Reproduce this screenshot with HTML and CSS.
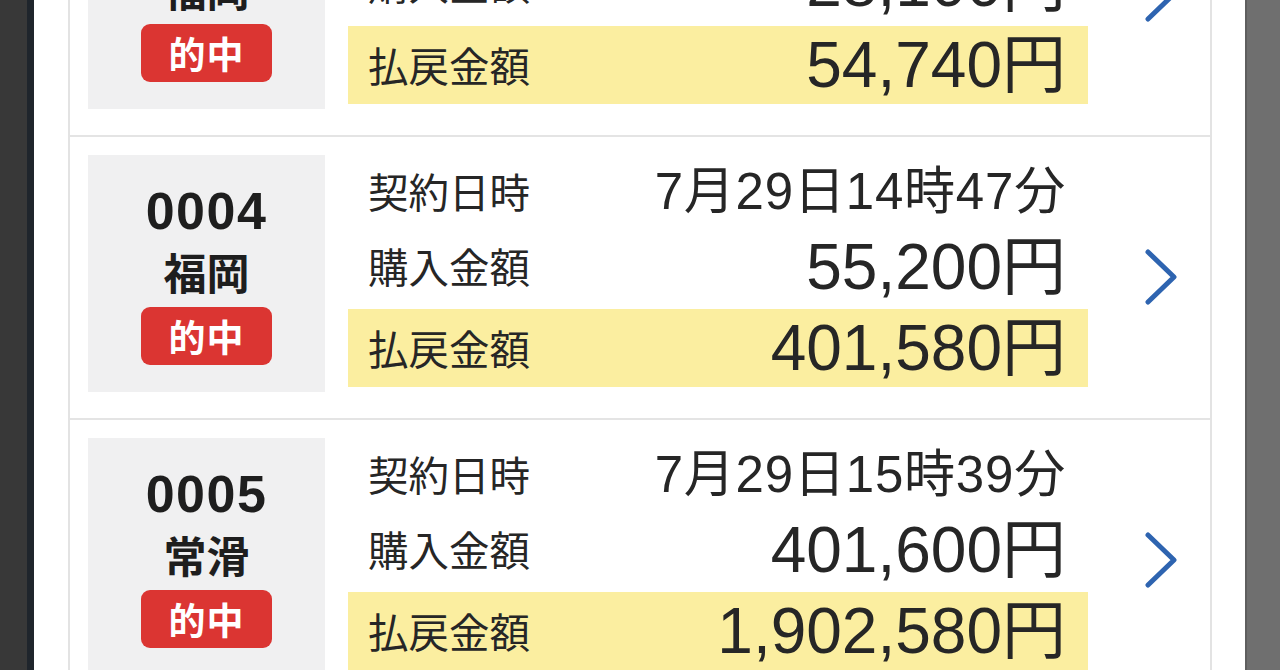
FILE: index.html
```html
<!DOCTYPE html>
<html lang="ja">
<head>
<meta charset="utf-8">
<title>的中一覧</title>
<link rel="stylesheet" href="styles.css">
</head>
<body>
<div class="screen">
  <div class="edge-left"><div class="edge-line"></div></div>
  <div class="sheet">
    <ul class="list">
      <li class="row">
        <div class="race">
          <div class="race-no">0003</div>
          <div class="race-place">福岡</div>
          <div class="badge">的中</div>
        </div>
        <div class="info">
          <div class="line first"><span class="label">契約日時</span><span class="date">7月29日13時58分</span></div>
          <div class="line"><span class="label">購入金額</span><span class="amount">28,100円</span></div>
          <div class="line pay"><span class="label">払戻金額</span><span class="amount">54,740円</span></div>
        </div>
        <div class="go"><svg class="chev" viewBox="0 0 32 56" width="32" height="56"><polyline points="3,3 29,28 3,53"/></svg></div>
      </li>
      <li class="row">
        <div class="race">
          <div class="race-no">0004</div>
          <div class="race-place">福岡</div>
          <div class="badge">的中</div>
        </div>
        <div class="info">
          <div class="line first"><span class="label">契約日時</span><span class="date">7月29日14時47分</span></div>
          <div class="line"><span class="label">購入金額</span><span class="amount">55,200円</span></div>
          <div class="line pay"><span class="label">払戻金額</span><span class="amount">401,580円</span></div>
        </div>
        <div class="go"><svg class="chev" viewBox="0 0 32 56" width="32" height="56"><polyline points="3,3 29,28 3,53"/></svg></div>
      </li>
      <li class="row">
        <div class="race">
          <div class="race-no">0005</div>
          <div class="race-place">常滑</div>
          <div class="badge">的中</div>
        </div>
        <div class="info">
          <div class="line first"><span class="label">契約日時</span><span class="date">7月29日15時39分</span></div>
          <div class="line"><span class="label">購入金額</span><span class="amount">401,600円</span></div>
          <div class="line pay"><span class="label">払戻金額</span><span class="amount">1,902,580円</span></div>
        </div>
        <div class="go"><svg class="chev" viewBox="0 0 32 56" width="32" height="56"><polyline points="3,3 29,28 3,53"/></svg></div>
      </li>
    </ul>
  </div>
  <div class="edge-right"></div>
</div>
</body>
</html>
```

FILE: styles.css
```css
* { box-sizing: border-box; }
html, body {
  margin: 0;
  padding: 0;
  width: 1280px;
  height: 670px;
  overflow: hidden;
  background: #ffffff;
}
.screen {
  display: flex;
  width: 1280px;
  height: 670px;
  overflow: hidden;
  font-family: "Liberation Sans", "Noto Sans CJK JP", sans-serif;
  color: #232323;
}
.edge-left {
  width: 34px;
  flex: none;
  background: #383838;
  display: flex;
  justify-content: flex-end;
}
.edge-line {
  width: 7px;
  background: #1f252c;
}
.sheet {
  width: 1211px;
  flex: none;
  background: #ffffff;
  padding-left: 34px;
}
.edge-right {
  flex: 1;
  background: #6f6f6f;
  border-left: 2px solid #5e5e5e;
}
.list {
  list-style: none;
  margin: -146px 0 0 0;
  padding: 0;
  width: 1144px;
  border-left: 2px solid #e3e3e3;
  border-right: 2px solid #e3e3e3;
}
.row {
  display: flex;
  align-items: stretch;
  padding: 18px 0 26px 18px;
  border-bottom: 2px solid #e4e4e4;
}
.race {
  width: 237px;
  height: 237px;
  flex: none;
  background: #f0f0f1;
  display: flex;
  flex-direction: column;
  align-items: center;
  justify-content: center;
  padding-top: 0;
}
.race-no {
  font-family: "Liberation Sans", sans-serif;
  font-weight: bold;
  font-size: 52px;
  letter-spacing: 1.5px;
  line-height: 58px;
  color: #1e1e1e;
}
.race-place {
  font-family: "Noto Sans CJK JP", sans-serif;
  font-weight: bold;
  font-size: 43px;
  line-height: 62px;
  color: #1e1e1e;
}
.badge {
  width: 131px;
  height: 58px;
  margin-top: 5px;
  border-radius: 9px;
  background: #db3532;
  color: #ffffff;
  font-family: "Noto Sans CJK JP", sans-serif;
  font-weight: bold;
  font-size: 37px;
  line-height: 58px;
  text-align: center;
  letter-spacing: 1px;
}
.info {
  width: 740px;
  flex: none;
  margin-left: 23px;
  display: flex;
  flex-direction: column;
}
.line {
  height: 77px;
  display: flex;
  align-items: center;
  justify-content: space-between;
  padding: 0 22px 0 20px;
}
.line.first {
  height: 73px;
}
.line.pay {
  height: 78px;
  margin-top: 4px;
  background: #fbeea0;
}
.label {
  font-family: "Noto Sans CJK JP", sans-serif;
  font-size: 40.5px;
  line-height: 1;
  color: #262626;
}
.date {
  font-size: 51px;
  line-height: 1;
  color: #262626;
  letter-spacing: 0.8px;
}
.amount {
  font-size: 64px;
  line-height: 1;
  color: #262626;
}
.go {
  flex: 1;
  display: flex;
  align-items: center;
  justify-content: flex-start;
  padding-left: 57px;
  padding-top: 6px;
}
.chev {
  display: block;
}
.chev polyline {
  fill: none;
  stroke: #2e64b0;
  stroke-width: 5;
  stroke-linecap: round;
  stroke-linejoin: round;
}
```
